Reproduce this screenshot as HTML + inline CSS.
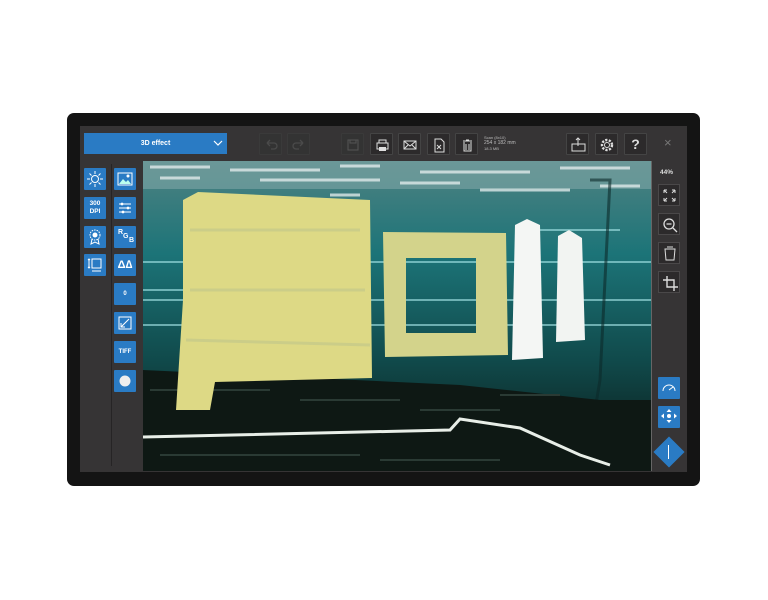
<!DOCTYPE html>
<html><head><meta charset="utf-8"><style>
*{margin:0;padding:0;box-sizing:border-box}
body{width:768px;height:600px;background:#fff;position:relative;overflow:hidden;font-family:"Liberation Sans",sans-serif}
.abs{position:absolute}
.frame{left:67px;top:113px;width:633px;height:373px;background:#141414;border-radius:7px}
.screen{left:80px;top:126px;width:607px;height:346px;background:#363435}
.tb{position:absolute;width:23px;height:22px;background:#2c2a2b;border:1px solid #444;border-radius:1px}
.bb{position:absolute;width:22px;height:22px;background:#2a7bc4;border-radius:1px;color:#fff;font-weight:bold;text-align:center}
.ib{position:absolute;width:22px;height:22px;background:#2c2a2b;border:1px solid #4a4849}
svg{position:absolute;left:0;top:0}
</style></head><body>
<div class="abs frame"></div>
<div class="abs screen"></div>
<div class="abs" style="left:84px;top:133px;width:143px;height:21px;background:#2a7bc4;color:#fff;font-size:7px;font-weight:bold;line-height:21px;text-align:center">3D effect</div>
<svg class="abs" style="left:213px;top:139px" width="10" height="8"><path d="M1 2 L5 6 L9 2" stroke="#fff" fill="none" stroke-width="1.2"/></svg>
<div class="tb" style="left:259px;top:133px;background:#333;border-color:#3a3a3a"><svg width="22" height="22"><path d="M7 9h7a3 3 0 0 1 0 6h-3M7 9l3-3M7 9l3 3" stroke="#4a4a4a" fill="none" stroke-width="1.3"/></svg></div>
<div class="tb" style="left:287px;top:133px;background:#333;border-color:#3a3a3a"><svg width="22" height="22"><path d="M15 9H8a3 3 0 0 0 0 6h3M15 9l-3-3M15 9l-3 3" stroke="#4a4a4a" fill="none" stroke-width="1.3"/></svg></div>
<div class="tb" style="left:341px;top:133px;background:#333;border-color:#3a3a3a"><svg width="22" height="22"><rect x="6" y="6" width="10" height="10" stroke="#555" fill="none"/><rect x="8" y="6" width="6" height="3" stroke="#555" fill="none"/></svg></div>
<div class="tb" style="left:370px;top:133px"><svg width="22" height="22"><rect x="6" y="9" width="11" height="6" stroke="#ddd" fill="none"/><rect x="8" y="6" width="7" height="3" stroke="#ddd" fill="none"/><rect x="8" y="13" width="7" height="4" fill="#ddd"/></svg></div>
<div class="tb" style="left:398px;top:133px"><svg width="22" height="22"><rect x="5" y="7" width="12" height="8" stroke="#ddd" fill="none"/><path d="M5 7l6 5 6-5M5 15l4-4M17 15l-4-4" stroke="#ddd" fill="none"/></svg></div>
<div class="tb" style="left:427px;top:133px"><svg width="22" height="22"><path d="M7 5h6l3 3v10H7z" stroke="#ddd" fill="none"/><path d="M9 11l4 4M13 11l-4 4" stroke="#ddd"/></svg></div>
<div class="tb" style="left:455px;top:133px"><svg width="22" height="22"><path d="M7 7h9M8 8v9h7V8M10 6h3M10 10v6M13 10v6" stroke="#ddd" fill="none"/></svg></div>
<div class="abs" style="left:484px;top:135px;color:#bbb;font-size:4px;line-height:5px">Scan (8x10)<br><span style="font-size:5px">254 x 182 mm</span><br>18.3 MB</div>
<div class="tb" style="left:566px;top:133px"><svg width="22" height="22"><rect x="5" y="10" width="13" height="7" stroke="#ddd" fill="none"/><path d="M11 4v8M9 6l2-2 2 2" stroke="#ddd" fill="none"/></svg></div>
<div class="tb" style="left:595px;top:133px"><svg width="22" height="22"><circle cx="11" cy="11" r="5" stroke="#ddd" stroke-width="2.4" fill="none" stroke-dasharray="2.2 1.4"/><circle cx="11" cy="11" r="2.5" stroke="#ddd" fill="none"/></svg></div>
<div class="tb" style="left:624px;top:133px;color:#ddd;font-size:14px;font-weight:bold;text-align:center;line-height:20px">?</div>
<div class="abs" style="left:664px;top:135px;color:#777;font-size:13px">×</div>
<div class="abs" style="left:111px;top:164px;width:1px;height:302px;background:#262425"></div>
<div class="bb" style="left:84px;top:168px"><svg width="22" height="22"><circle cx="11" cy="11" r="3.5" stroke="#fff" fill="none"/><path d="M11 3v3M11 16v3M3 11h3M16 11h3M5.5 5.5l2 2M14.5 14.5l2 2M5.5 16.5l2-2M14.5 7.5l2-2" stroke="#fff"/></svg></div>
<div class="bb" style="left:84px;top:197px;font-size:6.5px;line-height:8px;padding-top:3px">300<br>DPI</div>
<div class="bb" style="left:84px;top:226px"><svg width="22" height="22"><circle cx="11" cy="9" r="5" stroke="#fff" fill="none" stroke-dasharray="1.5 1"/><circle cx="11" cy="9" r="2.5" fill="#fff"/><path d="M8 13l-1 5 4-2 4 2-1-5" stroke="#fff" fill="none"/></svg></div>
<div class="bb" style="left:84px;top:254px"><svg width="22" height="22"><rect x="8" y="5" width="9" height="9" stroke="#fff" fill="none"/><path d="M5 5v9M4 6l1-1 1 1M4 13l1 1 1-1M8 17h9" stroke="#fff" fill="none"/></svg></div>
<div class="bb" style="left:114px;top:168px"><svg width="22" height="22"><rect x="4" y="5" width="14" height="12" stroke="#fff" fill="none"/><path d="M5 16l4-5 3 3 2-2 3 4z" fill="#bfe"/><circle cx="14" cy="8" r="1.5" fill="#fff"/></svg></div>
<div class="bb" style="left:114px;top:197px"><svg width="22" height="22"><path d="M5 7h12M5 11h12M5 15h12" stroke="#fff"/><circle cx="8" cy="7" r="1.4" fill="#fff"/><circle cx="14" cy="11" r="1.4" fill="#fff"/><circle cx="9" cy="15" r="1.4" fill="#fff"/></svg></div>
<div class="bb" style="left:114px;top:226px;font-size:7px"><span style="position:absolute;left:4px;top:3px">R</span><span style="position:absolute;left:9px;top:7px">G</span><span style="position:absolute;left:15px;top:11px">B</span></div>
<div class="bb" style="left:114px;top:254px;font-size:11px;line-height:22px">&#916;&#8710;</div>
<div class="bb" style="left:114px;top:283px;font-size:6px;line-height:22px">0</div>
<div class="bb" style="left:114px;top:312px"><svg width="22" height="22"><rect x="5" y="5" width="12" height="12" stroke="#fff" fill="none"/><path d="M15 7l-8 8M7 11v4h4" stroke="#fff" fill="none"/></svg></div>
<div class="bb" style="left:114px;top:341px;font-size:6px;line-height:22px">TIFF</div>
<div class="bb" style="left:114px;top:370px"><svg width="22" height="22"><circle cx="11" cy="11" r="5.5" fill="#eee"/></svg></div>
<svg class="abs" style="left:143px;top:161px" width="508" height="310" viewBox="143 161 508 310">
<defs>
<linearGradient id="t" x1="0" y1="0" x2="0" y2="1"><stop offset="0" stop-color="#4f8282"/><stop offset=".3" stop-color="#1c7478"/><stop offset=".65" stop-color="#10494a"/><stop offset="1" stop-color="#0b1512"/></linearGradient>
</defs>
<rect x="143" y="161" width="508" height="310" fill="url(#t)"/>
<rect x="143" y="161" width="508" height="28" fill="#7fa6a6" opacity=".6"/>
<path d="M150 167h60M230 170h90M340 166h40M420 172h110M560 168h70M160 178h40M260 180h120M400 183h60M480 190h90M600 186h40M330 195h30" stroke="#e8f0f0" stroke-width="3" opacity=".75"/>
<path d="M143 262h508M143 300h508M143 325h508M143 290h40M520 230h100" stroke="#a8e8ea" stroke-width="2" opacity=".6"/>
<path d="M590 180 L610 180 L600 380 L595 410" stroke="#0c2a2a" stroke-width="3" fill="none" opacity=".6"/>
<path d="M143 370 L460 385 L600 400 L651 400 L651 471 L143 471Z" fill="#0e1814"/>
<path d="M150 390h120M300 400h100M420 410h80M500 395h60M160 455h200M380 460h120" stroke="#2a3a34" stroke-width="2"/>
<path d="M143 437 L450 430 L460 419 L520 428 L580 455 L610 465" stroke="#e8eee8" stroke-width="3" fill="none"/>
<path d="M198 192 L370 200 L372 378 L215 382 L210 410 L176 410 L183 300 L183 200Z" fill="#ddd985"/>
<path d="M186 340 L370 345M190 230h170M190 290h175" stroke="#c4c98a" stroke-width="3" opacity=".7"/>
<path d="M383 232 L506 233 L508 355 L385 357Z M406 258 L406 333 L476 333 L476 258Z" fill="#d3d38b" fill-rule="evenodd"/>
<path d="M515 225 L527 219 L540 225 L543 358 L512 360Z" fill="#f4f6f4"/>
<path d="M558 236 L569 230 L582 238 L585 340 L556 342Z" fill="#f2f4f2"/>
</svg>
<div class="abs" style="left:651px;top:161px;width:1px;height:310px;background:#666"></div>
<div class="abs" style="left:660px;top:169px;color:#ddd;font-size:6.5px;font-weight:bold">44%</div>
<div class="ib" style="left:658px;top:184px"><svg width="22" height="22"><path d="M5 5l3 3M5 5h3M5 5v3M16 5l-3 3M16 5h-3M16 5v3M5 16l3-3M5 16h3M5 16v-3M16 16l-3-3M16 16h-3M16 16v-3" stroke="#ddd"/></svg></div>
<div class="ib" style="left:658px;top:213px"><svg width="22" height="22"><circle cx="10" cy="10" r="5" stroke="#ddd" fill="none" stroke-width="1.3"/><path d="M7.5 10h5M14 14l4 4" stroke="#ddd" stroke-width="1.3"/></svg></div>
<div class="ib" style="left:658px;top:242px"><svg width="22" height="22"><path d="M6 6h10l-1 11H7z M8 4h6" stroke="#ddd" fill="none"/></svg></div>
<div class="ib" style="left:658px;top:271px"><svg width="22" height="22"><path d="M8 4v11h11M4 8h11v11" stroke="#ddd" fill="none" stroke-width="1.4"/></svg></div>
<div class="bb" style="left:658px;top:377px"><svg width="22" height="22"><path d="M5 14a6 6 0 0 1 12 0" stroke="#fff" fill="none"/><path d="M11 13l4-3" stroke="#fff"/></svg></div>
<div class="bb" style="left:658px;top:406px"><svg width="22" height="22"><path d="M11 3l-2.5 3h5zM11 17l-2.5-3h5zM3 10l3-2.5v5zM19 10l-3-2.5v5z" fill="#fff"/><circle cx="11" cy="10" r="2" fill="#fff"/></svg></div>
<div class="abs" style="left:658px;top:441px;width:22px;height:22px;background:#2a7bc4;transform:rotate(45deg)"></div>
<div class="abs" style="left:668px;top:445px;width:1px;height:14px;background:#fff"></div>
</body></html>
